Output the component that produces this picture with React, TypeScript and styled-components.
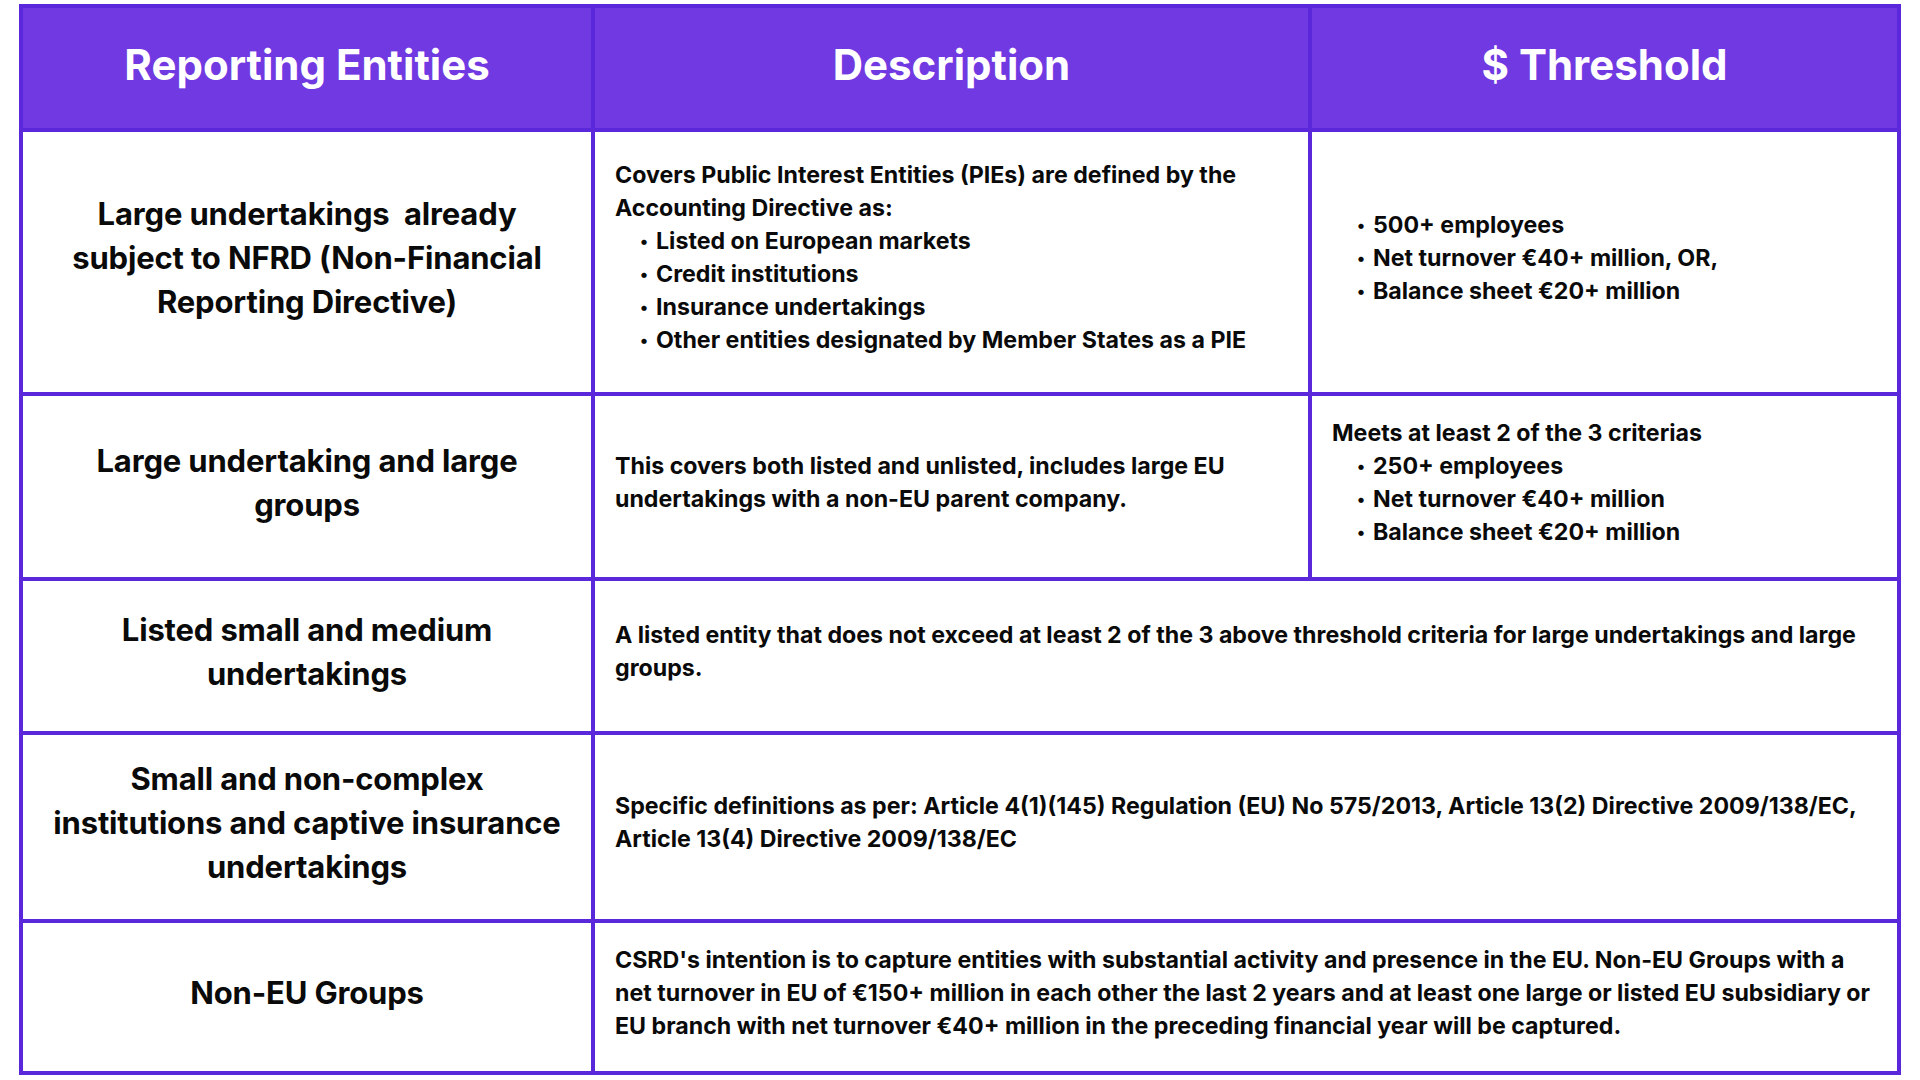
import * as React from 'react';
import styled, { createGlobalStyle } from 'styled-components';

const GlobalStyle = createGlobalStyle`
  body {
    margin: 0;
    background: #ffffff;
    font-family: Inter, "Noto Sans", Arial, sans-serif;
    color: #0a0a0a;
  }
`;

const Table = styled.div`
  display: grid;
  grid-template-columns: 568px 713px 585px;
  grid-template-rows: 120px 260px 181px 150px 184px 148px;
  gap: 4px;
  padding: 4px;
  margin: 4px 19px;
  width: fit-content;
  background: #5b27da;
`;

const HeadCell = styled.div`
  display: flex;
  align-items: center;
  justify-content: center;
  padding-bottom: 8px;
  background: #7139e1;
  color: #ffffff;
  font-size: 42px;
  font-weight: 700;
`;

const EntityCell = styled.div`
  display: flex;
  align-items: center;
  justify-content: center;
  padding-bottom: 8px;
  background: #ffffff;
  text-align: center;
  font-size: 31px;
  line-height: 44px;
  font-weight: 700;
  letter-spacing: -0.005em;
`;

const TextCell = styled.div<{ $span?: boolean }>`
  display: flex;
  flex-direction: column;
  justify-content: center;
  padding: 0 4px 8px 20px;
  background: #ffffff;
  grid-column: ${(p) => (p.$span ? 'span 2' : 'auto')};
  font-size: 23.2px;
  line-height: 33px;
  font-weight: 700;
  white-space: nowrap;
`;

const Para = styled.p`
  margin: 0;
`;

const List = styled.ul`
  margin: 0;
  padding: 0 0 0 25px;
  list-style: none;
`;

const Item = styled.li`
  display: flex;

  &::before {
    content: '•';
    flex: 0 0 16px;
    font-size: 17px;
  }
`;

const rows = [
  {
    entity: ['Large undertakings\u00a0 already', 'subject to NFRD (Non-Financial', 'Reporting Directive)'],
    lead: ['Covers Public Interest Entities (PIEs) are defined by the', 'Accounting Directive as:'],
    points: ['Listed on European markets', 'Credit institutions', 'Insurance undertakings', 'Other entities designated by Member States as a PIE'],
    threshold: { lead: null, points: ['500+ employees', 'Net turnover €40+ million, OR,', 'Balance sheet €20+ million'] },
  },
  {
    entity: ['Large undertaking and large', 'groups'],
    lead: ['This covers both listed and unlisted, includes large EU', 'undertakings with a non-EU parent company.'],
    points: [],
    threshold: { lead: 'Meets at least 2 of the 3 criterias', points: ['250+ employees', 'Net turnover €40+ million', 'Balance sheet €20+ million'] },
  },
  {
    entity: ['Listed small and medium', 'undertakings'],
    lead: ['A listed entity that does not exceed at least 2 of the 3 above threshold criteria for large undertakings and large', 'groups.'],
    points: [],
    threshold: null,
  },
  {
    entity: ['Small and non-complex', 'institutions and captive insurance', 'undertakings'],
    lead: ['Specific definitions as per: Article 4(1)(145) Regulation (EU) No 575/2013, Article 13(2) Directive 2009/138/EC,', 'Article 13(4) Directive 2009/138/EC'],
    points: [],
    threshold: null,
  },
  {
    entity: ['Non-EU Groups'],
    lead: [
      "CSRD's intention is to capture entities with substantial activity and presence in the EU. Non-EU Groups with a",
      'net turnover in EU of €150+ million in each other the last 2 years and at least one large or listed EU subsidiary or',
      'EU branch with net turnover €40+ million in the preceding financial year will be captured.',
    ],
    points: [],
    threshold: null,
  },
];

const Lines = ({ lines }: { lines: string[] }) => (
  <>
    {lines.map((line, i) => (
      <React.Fragment key={line}>
        {i > 0 && <br />}
        {line}
      </React.Fragment>
    ))}
  </>
);

export default function App() {
  return (
    <>
      <GlobalStyle />
      <Table>
        <HeadCell>Reporting Entities</HeadCell>
        <HeadCell>Description</HeadCell>
        <HeadCell>$ Threshold</HeadCell>
        {rows.map((row) => (
          <React.Fragment key={row.entity[0]}>
            <EntityCell>
              <div>
                <Lines lines={row.entity} />
              </div>
            </EntityCell>
            <TextCell $span={!row.threshold}>
              <Para>
                <Lines lines={row.lead} />
              </Para>
              {row.points.length > 0 && (
                <List>
                  {row.points.map((p) => <Item key={p}>{p}</Item>)}
                </List>
              )}
            </TextCell>
            {row.threshold && (
              <TextCell>
                {row.threshold.lead && <Para>{row.threshold.lead}</Para>}
                <List>
                  {row.threshold.points.map((p) => <Item key={p}>{p}</Item>)}
                </List>
              </TextCell>
            )}
          </React.Fragment>
        ))}
      </Table>
    </>
  );
}
